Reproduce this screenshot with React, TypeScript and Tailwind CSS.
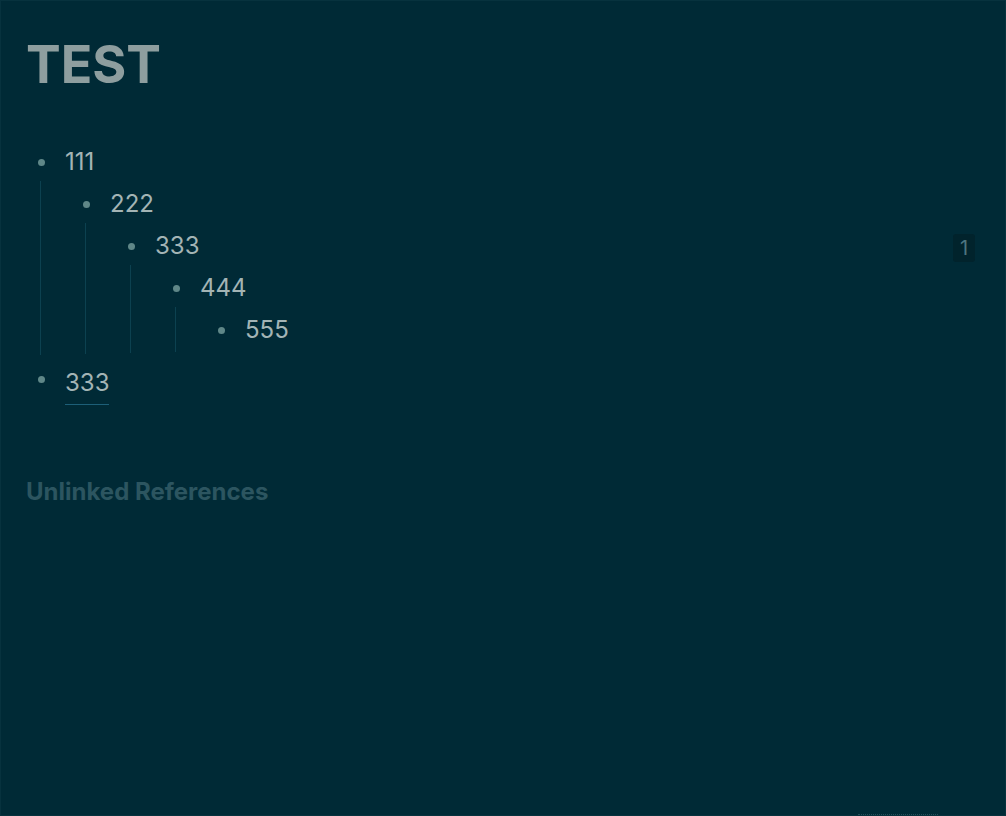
import type { ReactNode } from "react";

type Node = { text: string; children?: Node[]; link?: boolean; refs?: number };

const TREE: Node[] = [
  {
    text: "111",
    children: [
      {
        text: "222",
        children: [
          {
            text: "333",
            refs: 1,
            children: [{ text: "444", children: [{ text: "555" }] }],
          },
        ],
      },
    ],
  },
  { text: "333", link: true },
];

function Row({ node }: { node: Node }) {
  return (
    <div className="flex h-[42px] items-center">
      <div className="flex w-[30px] justify-center">
        <span className="h-[7px] w-[7px] rounded-full bg-[#5f8788]" />
      </div>
      <span
        className={
          node.link
            ? "ml-[9px] mt-[8px] border-b border-[#1d5f78] leading-[42px] text-[#a3b4b5]"
            : "ml-[9px] text-[#a3b4b5]"
        }
      >
        {node.text}
      </span>
      {node.refs ? (
        <span className="ml-auto mt-[4px] flex h-[28px] w-[22px] items-center justify-center rounded-[3px] bg-[#01232c] text-[20px] text-[#4d7580]">
          {node.refs}
        </span>
      ) : null}
    </div>
  );
}

function Block({ node }: { node: Node }): ReactNode {
  return (
    <div>
      <Row node={node} />
      {node.children && (
        <div className="ml-[14px] -mt-[2px] border-l border-[#0c4150] pb-[1px] pl-[30px] pt-[2px]">
          {node.children.map((c, i) => (
            <Block key={i} node={c} />
          ))}
        </div>
      )}
    </div>
  );
}

export default function App() {
  return (
    <div
      className="relative h-[816px] w-full overflow-hidden border border-[#07323e] bg-[#002a36] pl-[25px] pr-[30px]"
      style={{ fontFamily: "Inter, 'Noto Sans', sans-serif" }}
    >
      <h1 className="mt-[31px] text-[52px] font-bold leading-[65px] text-[#8e9e9f]">TEST</h1>

      <div className="mt-[44px] text-[24px]">
        <Block node={TREE[0]} />
        <div className="mt-[3px]">
          <Block node={TREE[1]} />
        </div>
      </div>

      <div className="mt-[77px] text-[24px] font-bold leading-[30px] text-[#2c5560]">Unlinked References</div>

      <div className="absolute bottom-0 left-[857px] w-[80px] border-b border-dotted border-[#24505a]" />
    </div>
  );
}
